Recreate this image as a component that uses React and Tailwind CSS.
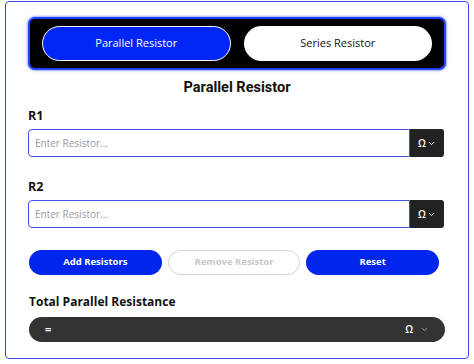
import { ChevronDown } from 'lucide-react';

function ResistorInput({ label }) {
  return (
    <div>
      <p className="text-[12.5px] font-bold leading-[16px] text-[#111]">{label}</p>
      <div className="mr-[2px] mt-[5px] flex h-[28px]">
        <input
          placeholder="Enter Resistor..."
          className="h-full flex-1 rounded-l-[4px] border border-[#4352e6] bg-white px-[6px] text-[10px] text-[#333] placeholder:text-[#9a9a9a] outline-none"
        />
        <button className="flex h-full w-[34px] items-center justify-center gap-[1px] rounded-r-[3px] bg-[#222222] text-[10px] font-semibold text-white">
          Ω<ChevronDown size={9} strokeWidth={2.5} />
        </button>
      </div>
    </div>
  );
}

export default function App() {
  return (
    <main className="h-[364px] w-[474px] bg-white px-[5px] pt-[1px] font-['Open_Sans',sans-serif]">
      <div className="h-[358px] rounded-[4px] border-[1.5px] border-[#3c4fe0] bg-white px-[22px] pt-[15px]">
        <div className="grid grid-cols-2 gap-[13px] rounded-[7px] border-2 border-[#2440ff] bg-black px-[12px] py-[7px] shadow-[0_0_3px_#3050ff]">
          <button className="h-[35px] rounded-full border border-white bg-[#0026f5] text-[11px] text-white">Parallel Resistor</button>
          <button className="h-[35px] rounded-full bg-white text-[11px] text-[#111]">Series Resistor</button>
        </div>

        <h1 className="mt-[8px] text-center font-['Roboto',sans-serif] text-[14.5px] font-bold leading-[20px] text-[#111]">
          Parallel Resistor
        </h1>

        <div className="mt-[10px]">
          <ResistorInput label="R1" />
        </div>
        <div className="mt-[22px]">
          <ResistorInput label="R2" />
        </div>

        <div className="mt-[22px] grid w-[411px] grid-cols-3 gap-[6px] pl-[1px]">
          <button className="h-[25px] rounded-full bg-[#0026ee] text-[9.5px] font-bold text-white">Add Resistors</button>
          <button className="h-[25px] rounded-full border-[1.5px] border-[#d4d4d4] bg-white text-[9.5px] font-bold text-[#c9c9c9]">
            Remove Resistor
          </button>
          <button className="h-[25px] rounded-full bg-[#0026ee] text-[9.5px] font-bold text-white">Reset</button>
        </div>

        <p className="mt-[18px] pl-[1px] text-[12px] font-bold leading-[18px] text-[#111]">Total Parallel Resistance</p>

        <div className="ml-[1px] mr-[1px] mt-[6px] flex h-[25px] items-center rounded-full bg-[#333333] pl-[16px] pr-[16px] text-white">
          <span className="text-[11px] font-bold">=</span>
          <span className="ml-auto text-[10px] font-semibold">Ω</span>
          <ChevronDown size={9} strokeWidth={2} className="ml-[7px] text-[#bbb]" />
        </div>
      </div>
    </main>
  );
}
